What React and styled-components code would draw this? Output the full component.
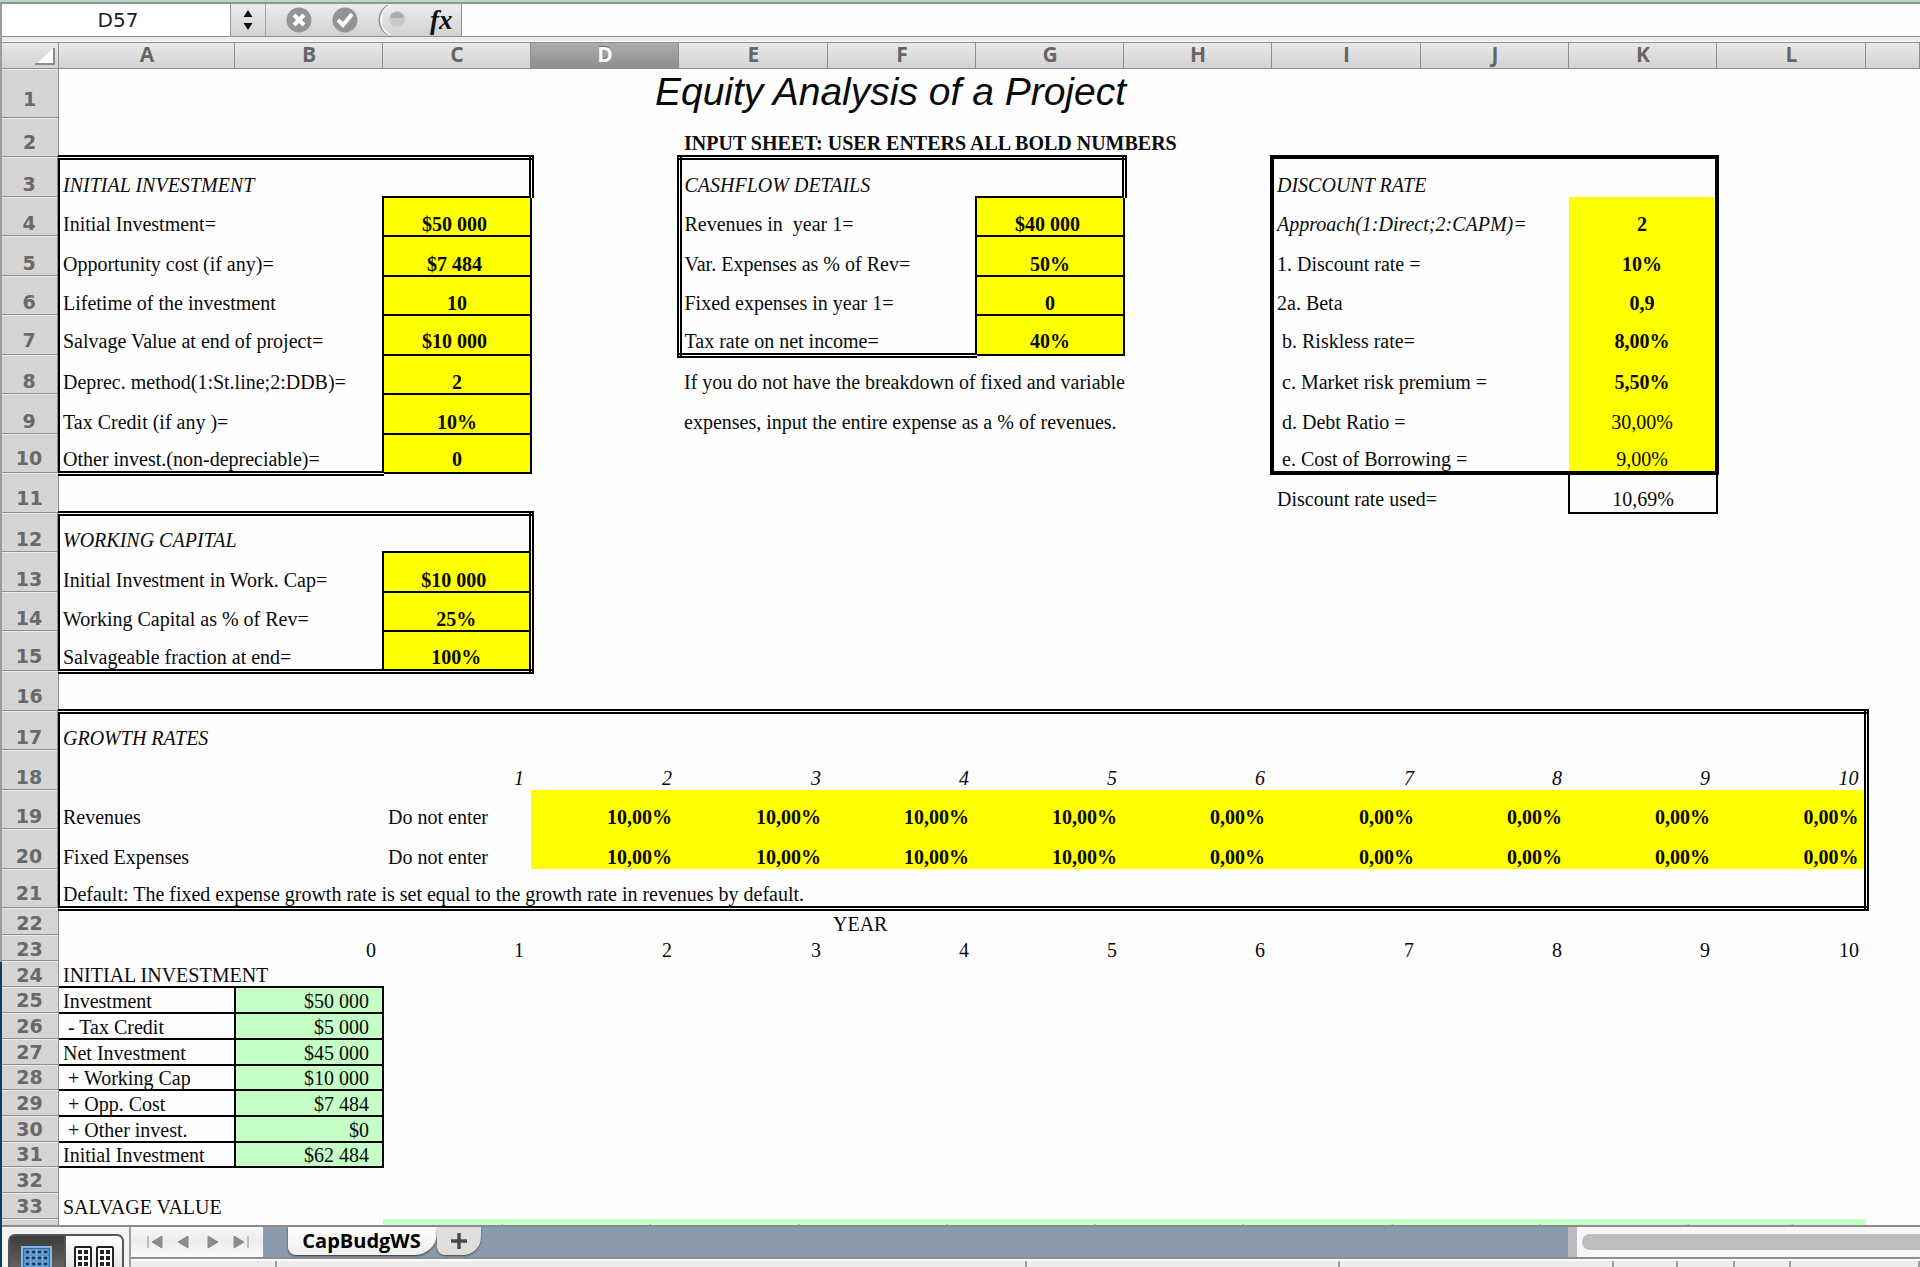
import React, { useState } from 'react';
import styled, { createGlobalStyle, css } from 'styled-components';

const GlobalStyle = createGlobalStyle`
  * {
    box-sizing: border-box;
  }
  body {
    margin: 0;
    background: #fff;
  }
  button, input {
    margin: 0;
    padding: 0;
    border: 0;
    border-radius: 0;
    background: none;
    outline: none;
  }
`;

const Window = styled.div`
  display: flex;
  flex-direction: column;
  height: 100vh;
  overflow: hidden;
  padding-left: 2px;
  border-top: 2px solid #bcd3c6;
  background: linear-gradient(#9a9f9c 960px, #123c5f 960px);
`;

/* ---------- formula bar ---------- */

const FormulaBar = styled.div`
  display: flex;
  flex: none;
  height: 35px;
  border-top: 2px solid #8b988f;
  border-bottom: 1px solid #8e8e8e;
  background: linear-gradient(#ececec, #d2d2d2);
`;

const NameBox = styled.input`
  width: 228px;
  padding-left: 4px;
  background: #fff;
  color: #222;
  font-family: 'DejaVu Sans', sans-serif;
  font-size: 20px;
  text-align: center;
`;

const Stepper = styled.button`
  display: flex;
  align-items: center;
  justify-content: center;
  width: 36px;
  border-left: 1px solid #999;
  border-right: 1px solid #a8a8a8;
`;

const BarTools = styled.div`
  display: flex;
  align-items: center;
  gap: 20px;
  width: 196px;
  padding-left: 20px;
  border-right: 1px solid #8e8e8e;
`;

const ToolButton = styled.button`
  display: flex;
  align-items: center;
  height: 26px;
`;

const FormulaInput = styled.input`
  flex: 1;
  min-width: 0;
  padding: 0 8px;
  background: #fefefe;
  font-family: 'DejaVu Sans', sans-serif;
  font-size: 20px;
`;

const BarGap = styled.div`
  flex: none;
  height: 5px;
  border-bottom: 1px solid #fff;
  background: #ececec;
`;

/* ---------- sheet ---------- */

const SheetArea = styled.main`
  flex: 1;
  min-height: 0;
  overflow: hidden;
  background: #fefefe;
`;

const Table = styled.table`
  width: 100%;
  table-layout: fixed;
  border-collapse: collapse;
  color: #0a0a0a;
  font-family: 'Liberation Serif', 'Times New Roman', serif;
  font-size: 20px;
  line-height: 22px;
  white-space: nowrap;
`;

const Row = styled.tr`
  height: ${p => p.$h}px;
`;

const ColumnHead = styled.th`
  height: 27px;
  padding: 0 0 3px;
  background: linear-gradient(#e9e9e9, #d2d2d2);
  box-shadow: inset -1px 0 #8e8e8e, inset 0 1px #8e8e8e, inset 0 -1px #8e8e8e;
  color: #666;
  font-family: 'Open Sans', 'Noto Sans', sans-serif;
  font-size: 21px;
  font-weight: 700;
  line-height: 24px;
  vertical-align: middle;
  ${p => p.$active && css`
    background: linear-gradient(#adadad, #8d8d8d);
    color: #fff;
    text-shadow: 0 -1px #6c6c6c;
  `}
`;

const SelectAll = styled.button`
  display: flex;
  align-items: flex-end;
  justify-content: flex-end;
  width: 100%;
  height: 22px;
  padding-right: 4px;
`;

const RowHead = styled.th`
  padding: 0 2px ${p => p.$pad + 1}px 0;
  background: #d5d5d5;
  box-shadow: inset -1px 0 #8e8e8e, inset 0 -1px #8e8e8e, inset 0 1px #ececec;
  color: #696969;
  font-family: 'DejaVu Sans', sans-serif;
  font-size: 19px;
  font-weight: 700;
  text-align: center;
  vertical-align: bottom;
`;

const BORDERS = {
  line: '2px solid #000',
  double: '5px double #000',
  thick: '4px solid #000',
};
const HALF = { line: 1, double: 2, thick: 2 };
const FILLS = { yellow: '#ffff00', green: '#c5ffc5' };

const borderOf = kind => BORDERS[kind] || '0';
const inner = (pad, kind) => Math.max(0, pad - (HALF[kind] || 0));

const Cell = styled.td`
  padding: 0 ${p => inner(p.$padRight, p.$edges.right)}px
    ${p => inner(p.$pad, p.$edges.bottom)}px ${p => inner(p.$padLeft, p.$edges.left)}px;
  border-top: ${p => borderOf(p.$edges.top)};
  border-right: ${p => borderOf(p.$edges.right)};
  border-bottom: ${p => borderOf(p.$edges.bottom)};
  border-left: ${p => borderOf(p.$edges.left)};
  background: ${p => FILLS[p.$fill] || 'transparent'};
  font-weight: ${p => (p.$bold ? 700 : 400)};
  font-style: ${p => (p.$italic ? 'italic' : 'normal')};
  text-align: ${p => p.$align || 'left'};
  vertical-align: bottom;
`;

const Title = styled.h1`
  margin: 0;
  padding-right: 22px;
  font-family: 'Liberation Sans', Arial, sans-serif;
  font-size: 39px;
  font-style: italic;
  font-weight: 400;
  line-height: 44px;
`;

/* ---------- bottom bar ---------- */

const BottomBar = styled.footer`
  display: flex;
  flex: none;
  height: 42px;
  border-top: 2px solid #8b8b8b;
  background: #f3f3f3;
`;

const ViewSwitch = styled.div`
  display: flex;
  align-items: flex-start;
  width: 129px;
  padding: 7px 0 0 6px;
  border-right: 2px solid #a0a0a0;
  overflow: hidden;
`;

const ViewButton = styled.button`
  display: flex;
  justify-content: center;
  width: 58px;
  height: 40px;
  padding-top: 10px;
  border: 2px solid #555;
  border-radius: ${p => (p.$active ? '7px 0 0 0' : '0 7px 0 0')};
  background: ${p => (p.$active ? 'linear-gradient(#3c3c3c, #686868)' : 'linear-gradient(#fff, #e2e2e2)')};
  ${p => !p.$active && css`border-left: 0;`}
`;

const BottomMain = styled.div`
  display: flex;
  flex: 1;
  flex-direction: column;
  min-width: 0;
`;

const TabStrip = styled.div`
  display: flex;
  flex: none;
  height: 32px;
  border-bottom: 2px solid #8f8f93;
  background: #8b9bae;
`;

const SheetNav = styled.nav`
  display: flex;
  align-items: center;
  justify-content: space-around;
  width: 132px;
  margin-right: 25px;
  padding: 0 8px 0 10px;
  background: linear-gradient(#f8f8f8, #ececec 45%, #fafafa);
`;

const NavButton = styled.button`
  display: flex;
`;

const SheetTab = styled.button`
  width: 149px;
  height: 28px;
  padding-right: 2px;
  border-radius: 0 0 22px 8px;
  background: linear-gradient(#fff, #eee);
  box-shadow: 0 1px 2px #333;
  color: #000;
  font-family: 'Open Sans', 'Noto Sans', sans-serif;
  font-size: 20px;
  font-weight: 700;
  line-height: 24px;
`;

const AddTab = styled.button`
  display: flex;
  align-items: center;
  justify-content: center;
  width: 44px;
  height: 28px;
  border-radius: 0 0 18px 8px;
  background: #dedede;
  box-shadow: 0 1px 2px #444;
`;

const Spacer = styled.div`
  flex: 1;
`;

const ScrollTrack = styled.div`
  width: 352px;
  padding: 7px 0 7px 5px;
  border-left: 9px solid #bcbcc0;
  background: #f6f6f6;
`;

const ScrollThumb = styled.div`
  height: 16px;
  border-radius: 8px 0 0 8px;
  background: #bdbdbd;
`;

const StatusRow = styled.div`
  display: flex;
  flex: 1;
  border-top: 2px solid #fff;
  background: #ededed;
`;

const StatusPane = styled.div`
  flex: ${p => (p.$w ? 'none' : 1)};
  width: ${p => (p.$w ? `${p.$w}px` : 'auto')};
  border-right: 2px solid #9c9c9c;
`;

/* ---------- data ---------- */

const COLS = 'ABCDEFGHIJKL'.split('');
const COL_WIDTHS = [176, 148, 148, 148, 149, 148, 148, 148, 149, 148, 148, 149];

const label = text => ({ text });
const head = text => ({ text, italic: true });
const input = text => ({ text, bold: true, align: 'center', fill: 'yellow' });
const rate = text => ({ text, align: 'center', fill: 'yellow' });
const money = text => ({ text, align: 'right', fill: 'green', padRight: 14 });

const series = (from, values, extra) => {
  const start = COLS.indexOf(from);
  const out = {};
  values.forEach((v, i) => {
    out[COLS[start + i]] = { text: String(v), align: 'right', ...extra };
  });
  return out;
};

const growth = ['10,00%', '10,00%', '10,00%', '10,00%', '0,00%', '0,00%', '0,00%', '0,00%', '0,00%'];
const years = [1, 2, 3, 4, 5, 6, 7, 8, 9, 10];

const ROWS = [
  { h: 49, pad: 7, cells: { D: { title: 'Equity Analysis of a Project', span: 5, align: 'center' } } },
  { h: 39, pad: 1, headPad: 3, cells: { E: { text: 'INPUT SHEET: USER ENTERS ALL BOLD NUMBERS', bold: true } } },
  { h: 40, pad: 1, cells: { A: head('INITIAL INVESTMENT'), E: head('CASHFLOW DETAILS'), I: head('DISCOUNT RATE') } },
  { h: 39, pad: 1, cells: {
    A: label('Initial Investment='), C: input('$50 000\u00a0'),
    E: label('Revenues in \u00a0year 1='), G: input('$40 000\u00a0'),
    I: head('Approach(1:Direct;2:CAPM)='), K: input('2') } },
  { h: 40, pad: 1, cells: {
    A: label('Opportunity cost (if any)='), C: input('$7 484\u00a0'),
    E: label('Var. Expenses as % of Rev='), G: input('50%'),
    I: label('1. Discount rate ='), K: input('10%') } },
  { h: 39, pad: 1, cells: {
    A: label('Lifetime of the investment'), C: input('10'),
    E: label('Fixed expenses in year 1='), G: input('0'),
    I: label('2a. Beta'), K: input('0,9') } },
  { h: 40, pad: 3, cells: {
    A: label('Salvage Value at end of project='), C: input('$10 000\u00a0'),
    E: label('Tax rate on net income='), G: input('40%'),
    I: label('\u00a0b. Riskless rate='), K: input('8,00%') } },
  { h: 39, pad: 1, cells: {
    A: label('Deprec. method(1:St.line;2:DDB)='), C: input('2'),
    E: label('If you do not have the breakdown of fixed and variable'),
    I: label('\u00a0c. Market risk premium ='), K: input('5,50%') } },
  { h: 40, pad: 1, cells: {
    A: label('Tax Credit (if any )='), C: input('10%'),
    E: label('expenses, input the entire expense as a % of revenues.'),
    I: label('\u00a0d. Debt Ratio ='), K: rate('30,00%') } },
  { h: 39, pad: 3, cells: {
    A: label('Other invest.(non-depreciable)='), C: input('0'),
    I: label('\u00a0e. Cost of Borrowing ='), K: rate('9,00%') } },
  { h: 40, pad: 3, cells: { I: label('Discount rate used='), K: { text: '10,69%', align: 'center' } } },
  { h: 39, pad: 1, cells: { A: head('WORKING CAPITAL') } },
  { h: 40, pad: 1, cells: { A: label('Initial Investment in Work. Cap='), C: input('$10 000\u00a0') } },
  { h: 39, pad: 1, cells: { A: label('Working Capital as % of Rev='), C: input('25%') } },
  { h: 40, pad: 3, cells: { A: label('Salvageable fraction at end='), C: input('100%') } },
  { h: 40, pad: 3, cells: {} },
  { h: 39, pad: 1, cells: { A: head('GROWTH RATES') } },
  { h: 40, pad: 1, cells: series('C', years, { italic: true }) },
  { h: 39, pad: 1, cells: {
    A: label('Revenues'), C: label('Do not enter'),
    ...series('D', growth, { bold: true, fill: 'yellow' }) } },
  { h: 40, pad: 1, cells: {
    A: label('Fixed Expenses'), C: label('Do not enter'),
    ...series('D', growth, { bold: true, fill: 'yellow' }) } },
  { h: 39, pad: 3, cells: {
    A: label('Default: The fixed expense growth rate is set equal to the growth rate in revenues by default.') } },
  { h: 27, pad: 0, cells: { F: label('YEAR') } },
  { h: 26, pad: 0, cells: series('B', [0, ...years]) },
  { h: 26, pad: 0, cells: { A: label('INITIAL INVESTMENT') } },
  { h: 26, pad: 1, cells: { A: label('Investment'), B: money('$50 000') } },
  { h: 26, pad: 1, cells: { A: label('\u00a0- Tax Credit'), B: money('$5 000') } },
  { h: 26, pad: 1, cells: { A: label('Net Investment'), B: money('$45 000') } },
  { h: 25, pad: 1, cells: { A: label('\u00a0+ Working Cap'), B: money('$10 000') } },
  { h: 26, pad: 1, cells: { A: label('\u00a0+ Opp. Cost'), B: money('$7 484') } },
  { h: 26, pad: 1, cells: { A: label('\u00a0+ Other invest.'), B: money('$0') } },
  { h: 25, pad: 1, cells: { A: label('Initial Investment'), B: money('$62 484') } },
  { h: 26, pad: 1, cells: {} },
  { h: 26, pad: 1, cells: { A: label('SALVAGE VALUE') } },
  { h: 26, pad: 1, cells: {
    ...series('C', Array(9).fill('$0'), { fill: 'green', padRight: 14 }), L: money('$10 000') } },
];

// later frames win over earlier ones where they share a cell edge
const FRAMES = [
  { from: 'A3', to: 'C10', kind: 'double' },
  { from: 'C4', to: 'C10', kind: 'line', grid: true },
  { from: 'E3', to: 'G7', kind: 'double' },
  { from: 'G4', to: 'G7', kind: 'line', grid: true },
  { from: 'K11', to: 'K11', kind: 'line' },
  { from: 'I3', to: 'K10', kind: 'thick' },
  { from: 'C13', to: 'C15', kind: 'line', grid: true },
  { from: 'A12', to: 'C15', kind: 'double' },
  { from: 'A17', to: 'L21', kind: 'double' },
  { from: 'A25', to: 'B31', kind: 'line', grid: true },
];

const parseRef = ref => [COLS.indexOf(ref[0]), Number(ref.slice(1))];

function edgesFor(col, row) {
  const edges = {};
  FRAMES.forEach(({ from, to, kind, grid }) => {
    const [c1, r1] = parseRef(from);
    const [c2, r2] = parseRef(to);
    if (col < c1 || col > c2 || row < r1 || row > r2) return;
    if (grid || row === r1) edges.top = kind;
    if (grid || row === r2) edges.bottom = kind;
    if (grid || col === c2) edges.right = kind;
    if (grid || col === c1) edges.left = kind;
  });
  if (col === 0 && edges.left) edges.left = edges.left === 'double' ? 'line' : undefined;
  return edges;
}

/* ---------- icons ---------- */

const StepperIcon = () => (
  <svg width="10" height="20" viewBox="0 0 10 20" fill="#111">
    <path d="M5 0l4.500 7h-9zM5 20l4.500-7h-9z" />
  </svg>
);

const CancelIcon = () => (
  <svg width="26" height="26" viewBox="0 0 26 26">
    <circle cx="13" cy="13" r="12.500" fill="#939393" />
    <path d="M8 8l10 10M18 8L8 18" stroke="#fff" strokeWidth="4" />
  </svg>
);

const AcceptIcon = () => (
  <svg width="26" height="26" viewBox="0 0 26 26">
    <circle cx="13" cy="13" r="12.500" fill="#939393" />
    <path d="M6 13l5 5 9-11" stroke="#fff" strokeWidth="4" fill="none" />
  </svg>
);

const BuilderIcon = () => (
  <svg width="28" height="30" viewBox="0 0 28 30">
    <path d="M11 0C-2 5-2 25 11 30" stroke="#8f8f8f" strokeWidth="1.500" fill="none" />
    <path d="M12.500 0C0 5 0 25 12.500 30" stroke="#fff" strokeWidth="1.500" fill="none" />
    <circle cx="19" cy="14" r="8" fill="#c9cacd" />
    <path d="M12 13a7 6 0 0 1 14 0z" fill="#aaacb1" />
  </svg>
);

const FxLabel = styled.span`
  padding-left: 4px;
  color: #111;
  font-family: 'Liberation Serif', serif;
  font-size: 27px;
  font-style: italic;
  font-weight: 700;
  line-height: 26px;
`;

const CornerIcon = () => (
  <svg width="20" height="17" viewBox="0 0 20 17">
    <path d="M19 0v16H1z" fill="#fff" />
    <path d="M19 0v16H0" stroke="#8a8a8a" strokeWidth="2" fill="none" />
  </svg>
);

const GridIcon = () => (
  <svg width="32" height="30" viewBox="0 0 32 30">
    <rect x="1" y="1" width="29" height="29" fill="#2f6ea8" stroke="#7fb8ea" strokeWidth="2" />
    {[5, 11, 17, 23].map(x => [4, 10, 16, 22].map(y => (
      <rect key={`${x}-${y}`} x={x - 1} y={y} width="5" height="4" fill="#16395c" stroke="#8ec6f4" />
    )))}
  </svg>
);

const PagesIcon = () => (
  <svg width="40" height="30" viewBox="0 0 40 30">
    {[1, 23].map(x => (
      <g key={x}>
        <rect x={x} y="1" width="16" height="34" rx="1" fill="#fff" stroke="#222" strokeWidth="2" />
        {[4, 10, 16, 22].map(y => (
          <path key={y} d={`M${x + 3} ${y + 2}h4M${x + 9} ${y + 2}h4`} stroke="#222" strokeWidth="4" />
        ))}
      </g>
    ))}
  </svg>
);

const NAV_ICONS = [
  ['First sheet', 'M3 2v12M17 2v12L7 8z'],
  ['Previous sheet', 'M14 2v12L4 8z'],
  ['Next sheet', 'M6 2v12l10-6z'],
  ['Last sheet', 'M3 2v12l10-6zM17 2v12'],
];

const PlusIcon = () => (
  <svg width="16" height="16" viewBox="0 0 16 16">
    <path d="M8 0v16M0 8h16" stroke="#4a4a4a" strokeWidth="3.500" />
  </svg>
);

/* ---------- components ---------- */

function SheetRow({ row, number }) {
  const tds = [];
  for (let c = 0; c < COLS.length; c++) {
    const cell = row.cells[COLS[c]] || {};
    const padLeft = c === 0 ? 4 : 5;
    tds.push(
      <Cell
        key={c}
        colSpan={cell.span}
        $edges={edgesFor(c, number)}
        $pad={cell.title ? 4 : row.pad}
        $padLeft={cell.align ? 0 : padLeft}
        $padRight={cell.align === 'right' ? cell.padRight || 7 : 0}
        $fill={cell.fill}
        $bold={cell.bold}
        $italic={cell.italic}
        $align={cell.align}
      >
        {cell.title ? <Title>{cell.title}</Title> : cell.text}
      </Cell>
    );
    if (cell.span) c += cell.span - 1;
  }

  return (
    <Row $h={row.h}>
      <RowHead scope="row" $pad={row.headPad || row.pad}>{number}</RowHead>
      {tds}
      <td />
    </Row>
  );
}

function Sheet() {
  return (
    <Table>
      <colgroup>
        <col width="57" />
        {COL_WIDTHS.map((w, i) => <col key={i} width={w} />)}
        <col />
      </colgroup>
      <thead>
        <tr>
          <ColumnHead>
            <SelectAll aria-label="Select all"><CornerIcon /></SelectAll>
          </ColumnHead>
          {COLS.map(c => <ColumnHead key={c} scope="col" $active={c === 'D'}>{c}</ColumnHead>)}
          <ColumnHead />
        </tr>
      </thead>
      <tbody>
        {ROWS.map((row, i) => <SheetRow key={i} row={row} number={i + 1} />)}
      </tbody>
    </Table>
  );
}

function App() {
  const [name, setName] = useState('D57');
  const [formula, setFormula] = useState('');

  return (
    <Window>
      <GlobalStyle />
      <FormulaBar>
        <NameBox aria-label="Name box" value={name} onChange={e => setName(e.target.value)} />
        <Stepper aria-label="Choose name"><StepperIcon /></Stepper>
        <BarTools>
          <ToolButton aria-label="Cancel"><CancelIcon /></ToolButton>
          <ToolButton aria-label="Accept"><AcceptIcon /></ToolButton>
          <ToolButton aria-label="Formula builder"><BuilderIcon /></ToolButton>
          <ToolButton aria-label="Insert function"><FxLabel>fx</FxLabel></ToolButton>
        </BarTools>
        <FormulaInput aria-label="Formula" value={formula} onChange={e => setFormula(e.target.value)} />
      </FormulaBar>
      <BarGap />

      <SheetArea>
        <Sheet />
      </SheetArea>

      <BottomBar>
        <ViewSwitch>
          <ViewButton $active aria-label="Normal view"><GridIcon /></ViewButton>
          <ViewButton aria-label="Page layout view"><PagesIcon /></ViewButton>
        </ViewSwitch>
        <BottomMain>
          <TabStrip>
            <SheetNav>
              {NAV_ICONS.map(([title, d]) => (
                <NavButton key={title} aria-label={title}>
                  <svg width="20" height="16" viewBox="0 0 20 16">
                    <path d={d} fill="#8c8c8c" stroke="#8c8c8c" strokeWidth="1" />
                  </svg>
                </NavButton>
              ))}
            </SheetNav>
            <SheetTab>CapBudgWS</SheetTab>
            <AddTab aria-label="Add sheet"><PlusIcon /></AddTab>
            <Spacer />
            <ScrollTrack><ScrollThumb /></ScrollTrack>
          </TabStrip>
          <StatusRow>
            <StatusPane $w={146} />
            <StatusPane $w={750} />
            <StatusPane />
            <StatusPane $w={274} />
            <StatusPane $w={64} />
            <StatusPane $w={57} />
            <StatusPane $w={56} />
            <StatusPane $w={129} />
          </StatusRow>
        </BottomMain>
      </BottomBar>
    </Window>
  );
}

export default App;
